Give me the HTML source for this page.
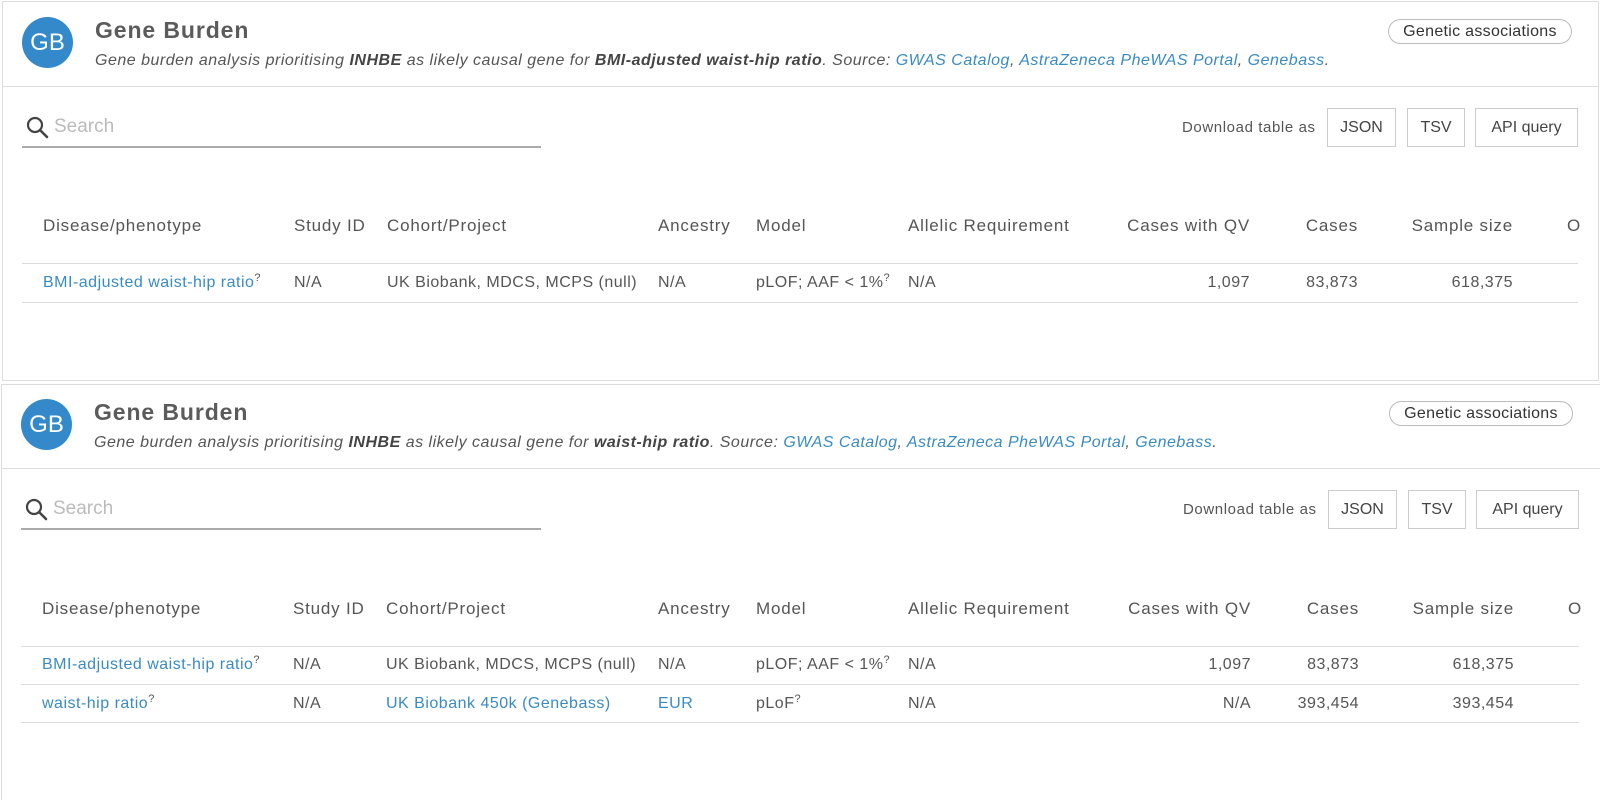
<!DOCTYPE html>
<html><head><meta charset="utf-8"><style>
*{margin:0;padding:0;box-sizing:border-box}
html{width:1600px;height:800px;overflow:hidden}
body{width:1600px;height:800px;background:#fff;font-family:"Liberation Sans",sans-serif;color:#555;position:relative;overflow:hidden}
.a{position:absolute;white-space:nowrap;line-height:20px}
.panel{position:absolute;border:1px solid #ddd}
.av{position:absolute;width:51px;height:51px;border-radius:50%;background:#3489ca;color:#fff;font-size:24px;text-align:center;line-height:51px}
.t{font-size:23px;font-weight:bold;color:#5b5b5b;line-height:26px;letter-spacing:0.9px}
.s{font-size:16px;font-style:italic;color:#555;letter-spacing:0.5px}
.s b{color:#444}
.hr{position:absolute;height:1px;background:#ddd}
.pill{position:absolute;border:1px solid #bbb;border-radius:13px;height:25px;font-size:16px;color:#333;text-align:center;line-height:23px;letter-spacing:0.3px}
.btn{position:absolute;border:1px solid #ccc;height:39px;font-size:16px;color:#444;text-align:center;line-height:37px}
.h{font-size:17px;color:#555;letter-spacing:0.8px}
.d{font-size:16px;color:#555;letter-spacing:0.5px}
.dl{font-size:15px;letter-spacing:0.6px}
.r{text-align:right}
.l{color:#3a8bc3}
sup{font-size:11px;color:#555;vertical-align:6px;line-height:0}
.ph{font-size:19px;color:#bbb}
</style></head><body>

<!-- Panel 1 -->
<div class="panel" style="left:2px;top:1px;width:1597px;height:380px"></div>
<div class="av" style="left:22px;top:17px">GB</div>
<div class="a t" style="left:95px;top:17px">Gene Burden</div>
<div class="a s" style="left:95px;top:51px">Gene burden analysis prioritising <b>INHBE</b> as likely causal gene for <b>BMI-adjusted waist-hip ratio</b>. Source: <span class="l">GWAS Catalog</span>, <span class="l">AstraZeneca PheWAS Portal</span>, <span class="l">Genebass</span>.</div>
<div class="pill" style="left:1388px;top:19px;width:184px">Genetic associations</div>
<div class="hr" style="left:2px;top:86px;width:1597px"></div>
<svg style="position:absolute;left:26px;top:116px" width="24" height="24" viewBox="0 0 24 24"><circle cx="9" cy="9" r="7" fill="none" stroke="#444" stroke-width="2.2"/><path d="M14 14L21 21" stroke="#444" stroke-width="2.6" stroke-linecap="round"/></svg>
<div class="a ph" style="left:54px;top:117px">Search</div>
<div class="hr" style="left:22px;top:146px;width:519px;height:2px;background:#aaa"></div>
<div class="a d dl" style="left:1182px;top:118px">Download table as</div>
<div class="btn" style="left:1327px;top:108px;width:69px">JSON</div>
<div class="btn" style="left:1407px;top:108px;width:58px">TSV</div>
<div class="btn" style="left:1475px;top:108px;width:103px">API query</div>

<div class="a h" style="left:43px;top:216px">Disease/phenotype</div>
<div class="a h" style="left:294px;top:216px">Study ID</div>
<div class="a h" style="left:387px;top:216px">Cohort/Project</div>
<div class="a h" style="left:658px;top:216px">Ancestry</div>
<div class="a h" style="left:756px;top:216px">Model</div>
<div class="a h" style="left:908px;top:216px">Allelic Requirement</div>
<div class="a h r" style="right:350px;top:216px">Cases with QV</div>
<div class="a h r" style="right:242px;top:216px">Cases</div>
<div class="a h r" style="right:87px;top:216px">Sample size</div>
<div class="a h" style="left:1567px;top:216px">O</div>
<div class="hr" style="left:22px;top:263px;width:1556px"></div>
<div class="a d l" style="left:43px;top:273px">BMI-adjusted waist-hip ratio<sup>?</sup></div>
<div class="a d" style="left:294px;top:273px">N/A</div>
<div class="a d" style="left:387px;top:273px">UK Biobank, MDCS, MCPS (null)</div>
<div class="a d" style="left:658px;top:273px">N/A</div>
<div class="a d" style="left:756px;top:273px">pLOF; AAF &lt; 1%<sup>?</sup></div>
<div class="a d" style="left:908px;top:273px">N/A</div>
<div class="a d r" style="right:350px;top:273px">1,097</div>
<div class="a d r" style="right:242px;top:273px">83,873</div>
<div class="a d r" style="right:87px;top:273px">618,375</div>
<div class="hr" style="left:22px;top:302px;width:1556px"></div>

<!-- Panel 2 -->
<div class="panel" style="left:1px;top:384px;width:1599px;height:416px;border-right:none;border-bottom:none"></div>
<div class="av" style="left:21px;top:399px">GB</div>
<div class="a t" style="left:94px;top:399px">Gene Burden</div>
<div class="a s" style="left:94px;top:433px">Gene burden analysis prioritising <b>INHBE</b> as likely causal gene for <b>waist-hip ratio</b>. Source: <span class="l">GWAS Catalog</span>, <span class="l">AstraZeneca PheWAS Portal</span>, <span class="l">Genebass</span>.</div>
<div class="pill" style="left:1389px;top:401px;width:184px">Genetic associations</div>
<div class="hr" style="left:1px;top:468px;width:1599px"></div>
<svg style="position:absolute;left:25px;top:498px" width="24" height="24" viewBox="0 0 24 24"><circle cx="9" cy="9" r="7" fill="none" stroke="#444" stroke-width="2.2"/><path d="M14 14L21 21" stroke="#444" stroke-width="2.6" stroke-linecap="round"/></svg>
<div class="a ph" style="left:53px;top:499px">Search</div>
<div class="hr" style="left:21px;top:528px;width:520px;height:2px;background:#aaa"></div>
<div class="a d dl" style="left:1183px;top:500px">Download table as</div>
<div class="btn" style="left:1328px;top:490px;width:69px">JSON</div>
<div class="btn" style="left:1408px;top:490px;width:58px">TSV</div>
<div class="btn" style="left:1476px;top:490px;width:103px">API query</div>

<div class="a h" style="left:42px;top:599px">Disease/phenotype</div>
<div class="a h" style="left:293px;top:599px">Study ID</div>
<div class="a h" style="left:386px;top:599px">Cohort/Project</div>
<div class="a h" style="left:658px;top:599px">Ancestry</div>
<div class="a h" style="left:756px;top:599px">Model</div>
<div class="a h" style="left:908px;top:599px">Allelic Requirement</div>
<div class="a h r" style="right:349px;top:599px">Cases with QV</div>
<div class="a h r" style="right:241px;top:599px">Cases</div>
<div class="a h r" style="right:86px;top:599px">Sample size</div>
<div class="a h" style="left:1568px;top:599px">O</div>
<div class="hr" style="left:21px;top:646px;width:1558px"></div>
<div class="a d l" style="left:42px;top:655px">BMI-adjusted waist-hip ratio<sup>?</sup></div>
<div class="a d" style="left:293px;top:655px">N/A</div>
<div class="a d" style="left:386px;top:655px">UK Biobank, MDCS, MCPS (null)</div>
<div class="a d" style="left:658px;top:655px">N/A</div>
<div class="a d" style="left:756px;top:655px">pLOF; AAF &lt; 1%<sup>?</sup></div>
<div class="a d" style="left:908px;top:655px">N/A</div>
<div class="a d r" style="right:349px;top:655px">1,097</div>
<div class="a d r" style="right:241px;top:655px">83,873</div>
<div class="a d r" style="right:86px;top:655px">618,375</div>
<div class="hr" style="left:21px;top:684px;width:1558px"></div>
<div class="a d l" style="left:42px;top:694px">waist-hip ratio<sup>?</sup></div>
<div class="a d" style="left:293px;top:694px">N/A</div>
<div class="a d l" style="left:386px;top:694px">UK Biobank 450k (Genebass)</div>
<div class="a d l" style="left:658px;top:694px">EUR</div>
<div class="a d" style="left:756px;top:694px">pLoF<sup>?</sup></div>
<div class="a d" style="left:908px;top:694px">N/A</div>
<div class="a d r" style="right:349px;top:694px">N/A</div>
<div class="a d r" style="right:241px;top:694px">393,454</div>
<div class="a d r" style="right:86px;top:694px">393,454</div>
<div class="hr" style="left:21px;top:722px;width:1558px"></div>
</body></html>
